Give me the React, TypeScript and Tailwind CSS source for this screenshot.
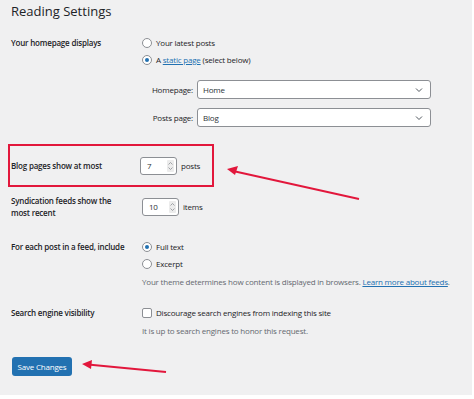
import React from "react";

const Radio = ({ checked }: { checked?: boolean }) => (
  <span className="flex h-[10px] w-[10px] shrink-0 items-center justify-center rounded-full border border-[#8c8f94] bg-white">
    {checked && <span className="h-[4px] w-[4px] rounded-full bg-[#2271b1]" />}
  </span>
);

const Chevron = () => (
  <svg width="8" height="6" viewBox="0 0 8 6" className="text-[#50575e]">
    <path d="M1 1.5 L4 4.5 L7 1.5" fill="none" stroke="currentColor" strokeWidth="1" />
  </svg>
);

const Select = ({ value }: { value: string }) => (
  <div className="flex h-[19px] w-[234px] items-center justify-between rounded-[3px] border border-[#8c8f94] bg-white pl-[5px] pr-[7px] text-[#2c3338]">
    <span>{value}</span>
    <Chevron />
  </div>
);

const NumberInput = ({ value }: { value: string }) => (
  <div className="flex h-[18px] w-[37px] items-center justify-between rounded-[3px] border border-[#8c8f94] bg-white pl-[6px] pr-[2px] text-[#2c3338]">
    <span>{value}</span>
    <svg width="7" height="12" viewBox="0 0 7 12">
      <rect x="0" y="0" width="7" height="12" rx="1" fill="#ececec" />
      <path d="M1.5 4.5 L3.5 2.5 L5.5 4.5" fill="none" stroke="#8c8f94" strokeWidth="0.8" />
      <path d="M1.5 7.5 L3.5 9.5 L5.5 7.5" fill="none" stroke="#8c8f94" strokeWidth="0.8" />
    </svg>
  </div>
);

export default function App() {
  return (
    <div className="relative h-[399px] w-[474px] overflow-hidden bg-white font-['Open_Sans',sans-serif] text-[8px] tracking-[-0.2px] text-[#1d2327]">
      <div className="h-[395px] w-[472px] bg-[#f0f0f1] pl-[11px] pt-[1px]">
        <h1 className="text-[13px] leading-[20px] tracking-[0px] text-[#1d2327]">Reading Settings</h1>

        {/* homepage displays */}
        <div className="mt-[15px] grid grid-cols-[131px_1fr]">
          <div className="font-semibold leading-[14px]">Your homepage displays</div>
          <div className="flex flex-col">
            <div className="flex h-[14px] items-center gap-[4px]">
              <Radio />
              <span>Your latest posts</span>
            </div>
            <div className="mt-[3px] flex h-[14px] items-center gap-[4px]">
              <Radio checked />
              <span>
                A <span className="text-[#2271b1] underline">static page</span> (select below)
              </span>
            </div>
            <div className="mt-[13px] grid grid-cols-[51px_1fr] items-center gap-x-[4px] gap-y-[9px]">
              <span className="text-right">Homepage:</span>
              <Select value="Home" />
              <span className="text-right">Posts page:</span>
              <Select value="Blog" />
            </div>
          </div>
        </div>

        {/* blog pages - highlighted */}
        <div className="-ml-[3px] mt-[17px] grid h-[43px] w-[206px] grid-cols-[129px_1fr] items-center border-2 border-[#e2173c] pl-[1px]">
          <div className="font-semibold">Blog pages show at most</div>
          <div className="flex items-center gap-[4px]">
            <NumberInput value="7" />
            <span>posts</span>
          </div>
        </div>

        {/* syndication */}
        <div className="mt-[8px] grid grid-cols-[131px_1fr] items-center">
          <div className="font-semibold leading-[12px]">
            Syndication feeds show the
            <br />
            most recent
          </div>
          <div className="flex items-center gap-[4px]">
            <NumberInput value="10" />
            <span>items</span>
          </div>
        </div>

        {/* feed */}
        <div className="mt-[21px] grid grid-cols-[131px_1fr]">
          <div className="font-semibold leading-[14px]">For each post in a feed, include</div>
          <div className="flex flex-col">
            <div className="flex h-[14px] items-center gap-[4px]">
              <Radio checked />
              <span>Full text</span>
            </div>
            <div className="mt-[3px] flex h-[14px] items-center gap-[4px]">
              <Radio />
              <span>Excerpt</span>
            </div>
            <div className="mt-[4px] whitespace-nowrap leading-[14px] text-[#646970]">
              Your theme determines how content is displayed in browsers.{" "}
              <span className="text-[#2271b1] underline">Learn more about feeds</span>.
            </div>
          </div>
        </div>

        {/* search engine */}
        <div className="mt-[17px] grid grid-cols-[131px_1fr]">
          <div className="font-semibold leading-[14px]">Search engine visibility</div>
          <div className="flex flex-col">
            <div className="flex h-[14px] items-center gap-[4px]">
              <span className="h-[10px] w-[10px] shrink-0 rounded-[2px] border border-[#8c8f94] bg-white" />
              <span>Discourage search engines from indexing this site</span>
            </div>
            <div className="mt-[4px] leading-[14px] text-[#646970]">
              It is up to search engines to honor this request.
            </div>
          </div>
        </div>

        <button className="ml-[1px] mt-[19px] flex h-[19px] w-[60px] items-center justify-center rounded-[3px] bg-[#2271b1] text-white">
          Save Changes
        </button>
      </div>

      {/* annotation arrows */}
      <svg className="pointer-events-none absolute left-0 top-0" width="474" height="399">
        <line x1="359" y1="199" x2="233" y2="171" stroke="#e2173c" strokeWidth="2" />
        <path d="M227 169 L238 166 L235 175 Z" fill="#e2173c" />
        <line x1="166" y1="372" x2="88" y2="364.6" stroke="#e2173c" strokeWidth="2" />
        <path d="M82 364 L92 360 L91 369 Z" fill="#e2173c" />
      </svg>
    </div>
  );
}
